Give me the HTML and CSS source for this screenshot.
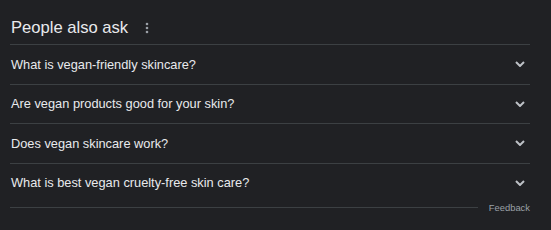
FILE: index.html
```html
<!DOCTYPE html>
<html>
<head>
<meta charset="utf-8">
<link rel="stylesheet" href="styles.css">
</head>
<body>
<div class="paa">
  <div class="head">
    <span class="title">People also ask</span>
    <svg class="dots" width="4" height="12" viewBox="0 0 4 12"><circle cx="2" cy="2" r="1.3"/><circle cx="2" cy="6" r="1.3"/><circle cx="2" cy="10" r="1.3"/></svg>
  </div>
  <div class="row"><span class="q">What is vegan-friendly skincare?</span><svg class="chev" width="10" height="6" viewBox="0 0 10 6"><path d="M1 1 L5 5 L9 1"/></svg></div>
  <div class="row"><span class="q">Are vegan products good for your skin?</span><svg class="chev" width="10" height="6" viewBox="0 0 10 6"><path d="M1 1 L5 5 L9 1"/></svg></div>
  <div class="row"><span class="q">Does vegan skincare work?</span><svg class="chev" width="10" height="6" viewBox="0 0 10 6"><path d="M1 1 L5 5 L9 1"/></svg></div>
  <div class="row last"><span class="q">What is best vegan cruelty-free skin care?</span><svg class="chev" width="10" height="6" viewBox="0 0 10 6"><path d="M1 1 L5 5 L9 1"/></svg></div>
  <div class="foot"><div class="line"></div><span class="fb">Feedback</span></div>
</div>
</body>
</html>
```
FILE: styles.css
```css
html, body {
  margin: 0;
  padding: 0;
  background: #202124;
}
body {
  width: 551px;
  height: 230px;
  overflow: hidden;
  font-family: "Liberation Sans", Arial, sans-serif;
}
.paa {
  margin-left: 10px;
  width: 520px;
}
.head {
  display: flex;
  align-items: center;
  padding-top: 12px;
  height: 32px;
  box-sizing: content-box;
  border-bottom: 1px solid #3c4043;
}
.title {
  font-size: 16.6px;
  color: #e8eaed;
  margin-left: 1px;
  line-height: 32px;
}
.dots {
  margin-left: 17px;
  fill: #9aa0a6;
}
.row {
  display: flex;
  align-items: center;
  justify-content: space-between;
  height: 38.5px;
  border-bottom: 1px solid #3c4043;
  padding-right: 5px;
}
.row.last {
  border-bottom: none;
}
.q {
  font-size: 12.8px;
  color: #e8eaed;
  margin-left: 1px;
}
.chev {
  fill: none;
  stroke: #bdc1c6;
  stroke-width: 2;
}
.foot {
  display: flex;
  align-items: center;
  height: 10px;
  margin-top: 0;
}
.line {
  flex: 1;
  height: 1px;
  background: #3c4043;
  margin-right: 11px;
}
.fb {
  font-size: 9.4px;
  color: #9aa0a6;
}
```
